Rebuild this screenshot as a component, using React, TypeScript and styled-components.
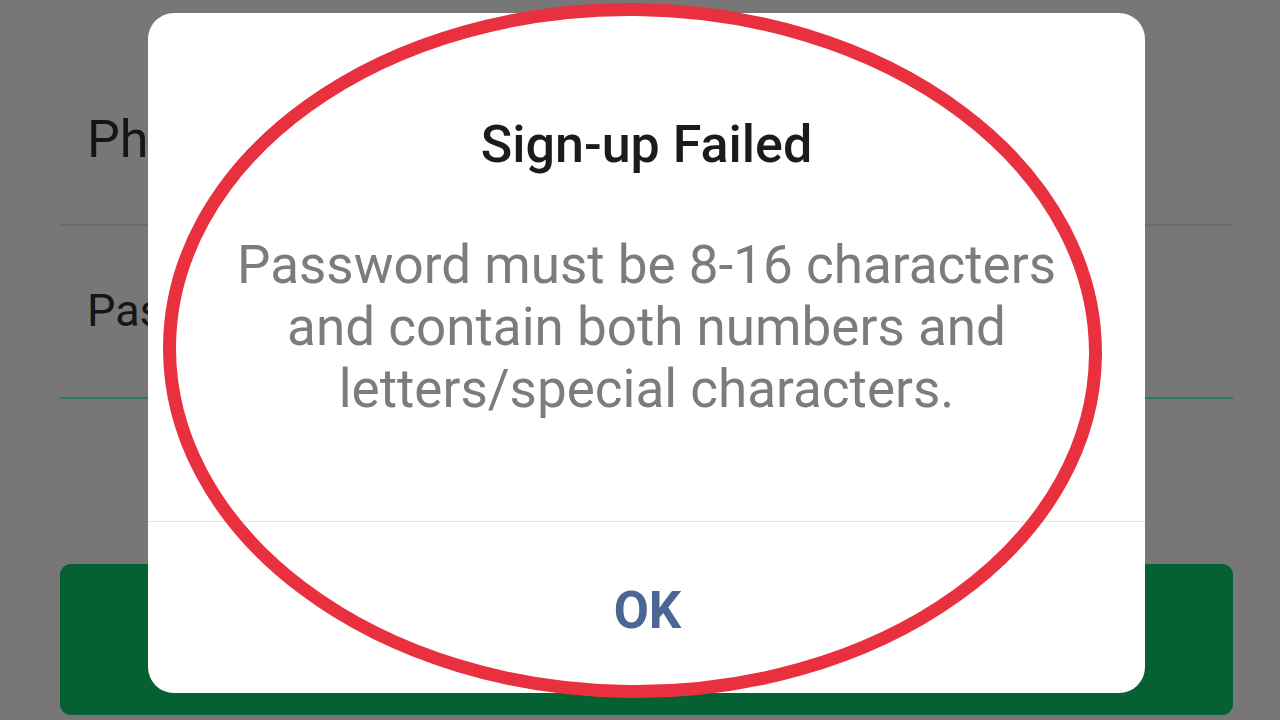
import React from "react";
import styled, { createGlobalStyle } from "styled-components";

const Global = createGlobalStyle`
  html, body { margin: 0; padding: 0; overflow: hidden; }
  body { font-family: Roboto, "Noto Sans", Arial, sans-serif; }
`;

const Screen = styled.div`
  position: relative;
  width: 1280px;
  height: 720px;
  background: #777777;
  overflow: hidden;
`;

const Form = styled.div`
  display: flex;
  flex-direction: column;
  padding: 0 47px 0 60px;
`;

const Field = styled.div<{ $height: number; $line: string }>`
  display: flex;
  align-items: center;
  height: ${(p) => p.$height}px;
  padding-left: 27px;
  border-bottom: 2px solid ${(p) => p.$line};
  box-sizing: border-box;
`;

const FieldLabel = styled.span<{ $size: number }>`
  font-family: Roboto, "Noto Sans", sans-serif;
  font-size: ${(p) => p.$size}px;
  color: #151515;
`;

const SubmitButton = styled.div`
  margin-top: 165px;
  height: 151px;
  background: #066132;
  border-radius: 11px;
`;

const Dialog = styled.div`
  position: absolute;
  left: 148px;
  top: 13px;
  width: 997px;
  height: 680px;
  background: #ffffff;
  border-radius: 26px;
  display: flex;
  flex-direction: column;
  align-items: center;
  padding-top: 102px;
  box-sizing: border-box;
`;

const Title = styled.h1`
  margin: 0;
  font-family: Roboto, "Noto Sans", sans-serif;
  font-weight: 500;
  font-size: 52px;
  line-height: 60px;
  color: #1b1b1b;
`;

const Message = styled.p`
  margin: 59px 0 0;
  font-family: Roboto, "Noto Sans", sans-serif;
  font-weight: 400;
  font-size: 53px;
  line-height: 62px;
  color: #7c7c7c;
  text-align: center;
  white-space: nowrap;
`;

const Spacer = styled.div`
  flex: 1;
`;

const Footer = styled.div`
  align-self: stretch;
  height: 172px;
  padding-top: 6px;
  box-sizing: border-box;
  border-top: 1px solid #e4e4e4;
  display: flex;
  align-items: center;
  justify-content: center;
`;

const OkButton = styled.span`
  font-family: Roboto, "Noto Sans", sans-serif;
  font-weight: 700;
  font-size: 51px;
  color: #4c6694;
  margin-left: 2px;
`;

const Highlight = styled.svg`
  position: absolute;
  left: 0;
  top: 0;
  width: 1280px;
  height: 720px;
  pointer-events: none;
`;

export default function App() {
  return (
    <>
      <Global />
      <Screen>
        <Form>
          <Field $height={226} $line="#6c6c6c">
            <FieldLabel $size={52} style={{ paddingTop: 54 }}>Phone</FieldLabel>
          </Field>
          <Field $height={173} $line="#2f7a57">
            <FieldLabel $size={45} style={{ paddingBottom: 2 }}>Password</FieldLabel>
          </Field>
          <SubmitButton />
        </Form>
        <Dialog>
          <Title>Sign-up Failed</Title>
          <Message>
            Password must be 8-16 characters
            <br />
            and contain both numbers and
            <br />
            letters/special characters.
          </Message>
          <Spacer />
          <Footer>
            <OkButton>OK</OkButton>
          </Footer>
        </Dialog>
        <Highlight viewBox="0 0 1280 720">
          <ellipse
            cx="632.5"
            cy="350.5"
            rx="463"
            ry="341"
            fill="none"
            stroke="#e9303f"
            strokeWidth="13"
            transform="rotate(0.6 632.5 350.5)"
          />
        </Highlight>
      </Screen>
    </>
  );
}
